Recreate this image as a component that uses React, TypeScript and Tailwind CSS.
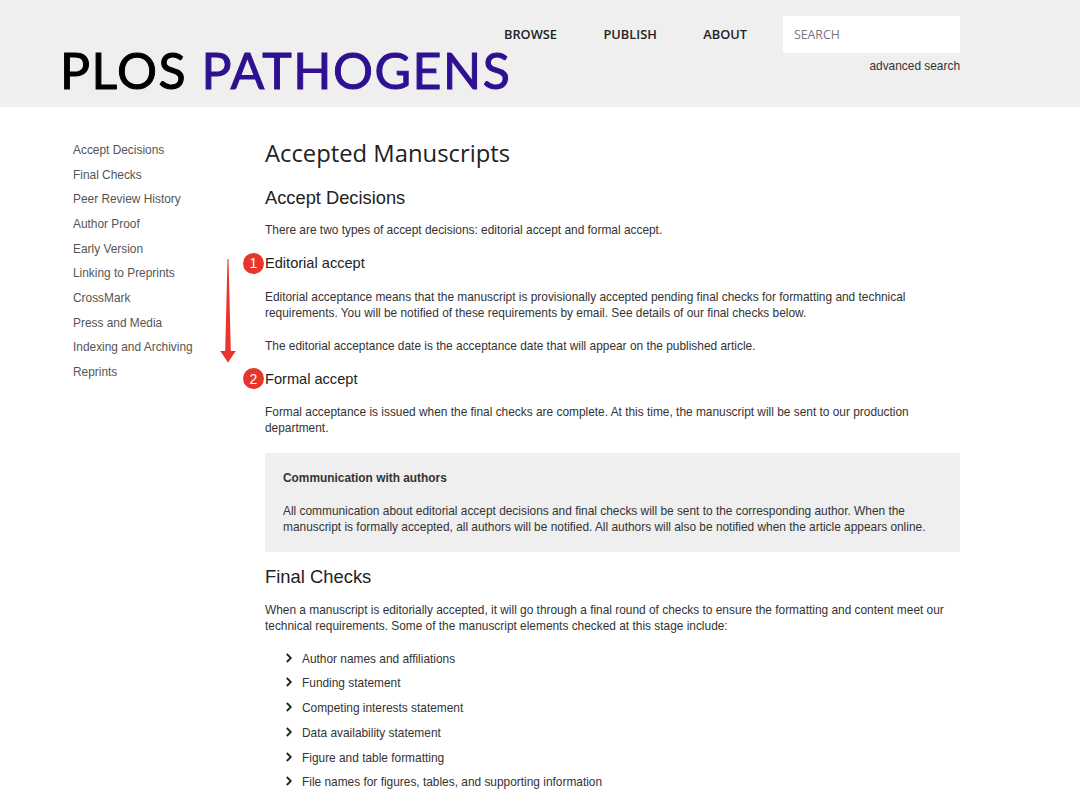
import React from "react";

const sideLinks = [
  "Accept Decisions",
  "Final Checks",
  "Peer Review History",
  "Author Proof",
  "Early Version",
  "Linking to Preprints",
  "CrossMark",
  "Press and Media",
  "Indexing and Archiving",
  "Reprints",
];

const checks = [
  "Author names and affiliations",
  "Funding statement",
  "Competing interests statement",
  "Data availability statement",
  "Figure and table formatting",
  "File names for figures, tables, and supporting information",
];

function Badge({ n }: { n: number }) {
  return (
    <span className="absolute left-[-22px] top-[-0.5px] flex h-[21px] w-[21px] items-center justify-center rounded-full bg-[#e8352b] text-[14px] leading-none text-white">
      {n}
    </span>
  );
}

function Arrow() {
  return (
    <svg className="absolute left-[-45px] top-[152px]" width="16" height="104" viewBox="0 0 16 104">
      <path d="M7.5 0 L8.5 0 L10.8 92 L15.8 92 L8 103.5 L0.2 92 L5.2 92 Z" fill="#e8352b" />
    </svg>
  );
}

export default function App() {
  return (
    <div className="h-[807px] overflow-hidden bg-white font-['Liberation_Sans',sans-serif] text-[11.9px] leading-[16px] text-[#333]">
      <header className="h-[107px] bg-[#efefef]">
        <div className="relative ml-[60px] flex h-full w-[900px] justify-between">
          <div className="mt-[41px] h-fit font-['Lato',sans-serif] text-[50px] font-normal leading-[58px] tracking-[1.5px] text-black [-webkit-text-stroke:1px_currentColor]">
            PLOS <span className="text-[#2e1090]">PATHOGENS</span>
          </div>
          <div className="absolute right-0 top-[16px] flex">
            <nav className="flex h-[37px] items-center gap-[46.5px] pb-[1px] pr-[36px] font-['Open_Sans',sans-serif] text-[12.8px] font-semibold text-[#222]">
              <span>BROWSE</span>
              <span>PUBLISH</span>
              <span>ABOUT</span>
            </nav>
            <div className="flex flex-col items-end">
              <div className="flex h-[37px] w-[177px] items-center bg-white pl-[11px] pt-[1px] font-['Open_Sans',sans-serif] text-[12.3px] text-[#777]">
                SEARCH
              </div>
              <span className="mt-[5px] text-[#333]">advanced search</span>
            </div>
          </div>
        </div>
      </header>

      <div className="ml-[60px] flex w-[900px]">
        <aside className="w-[205px] shrink-0 pl-[13px] pt-[35px] text-[#555]">
          <ul className="flex flex-col gap-[8.67px]">
            {sideLinks.map((l) => (
              <li key={l}>{l}</li>
            ))}
          </ul>
        </aside>

        <main className="relative w-[695px] pt-[30px]">
          <h1 className="font-['Open_Sans',sans-serif] text-[23.8px] leading-[32px] text-[#222]">
            Accepted Manuscripts
          </h1>
          <h2 className="mt-[17px] text-[18.3px] leading-[24px] text-[#222]">
            Accept Decisions
          </h2>
          <p className="mt-[12px]">There are two types of accept decisions: editorial accept and formal accept.</p>

          <h3 className="relative mt-[15px] text-[14.6px] leading-[20px] text-[#222]">
            <Badge n={1} />
            Editorial accept
          </h3>
          <p className="mt-[15.5px]">
            Editorial acceptance means that the manuscript is provisionally accepted pending final checks for formatting and technical requirements. You will be notified of these requirements by email. See details of our final checks below.
          </p>
          <p className="mt-[17px]">The editorial acceptance date is the acceptance date that will appear on the published article.</p>

          <h3 className="relative mt-[15px] text-[14.6px] leading-[20px] text-[#222]">
            <Badge n={2} />
            Formal accept
          </h3>
          <p className="mt-[15px]">
            Formal acceptance is issued when the final checks are complete. At this time, the manuscript will be sent to our production department.
          </p>

          <div className="mt-[17.5px] h-[99px] bg-[#efefef] px-[18px] pt-[16.5px]">
            <p className="font-bold">Communication with authors</p>
            <p className="mt-[17px]">
              All communication about editorial accept decisions and final checks will be sent to the corresponding author. When the manuscript is formally accepted, all authors will be notified. All authors will also be notified when the article appears online.
            </p>
          </div>

          <h2 className="mt-[12.5px] text-[18.4px] leading-[24px] text-[#222]">
            Final Checks
          </h2>
          <p className="mt-[13px]">
            When a manuscript is editorially accepted, it will go through a final round of checks to ensure the formatting and content meet our technical requirements. Some of the manuscript elements checked at this stage include:
          </p>

          <ul className="mt-[17px] flex flex-col gap-[8.8px] pl-[37px]">
            {checks.map((c) => (
              <li key={c} className="relative">
                <svg className="absolute left-[-17px] top-[2px]" width="8" height="10" viewBox="0 0 8 10">
                  <path d="M1.8 1 L5.8 5 L1.8 9" fill="none" stroke="#222" strokeWidth="1.8" />
                </svg>
                {c}
              </li>
            ))}
          </ul>
          <Arrow />
        </main>
      </div>
    </div>
  );
}
